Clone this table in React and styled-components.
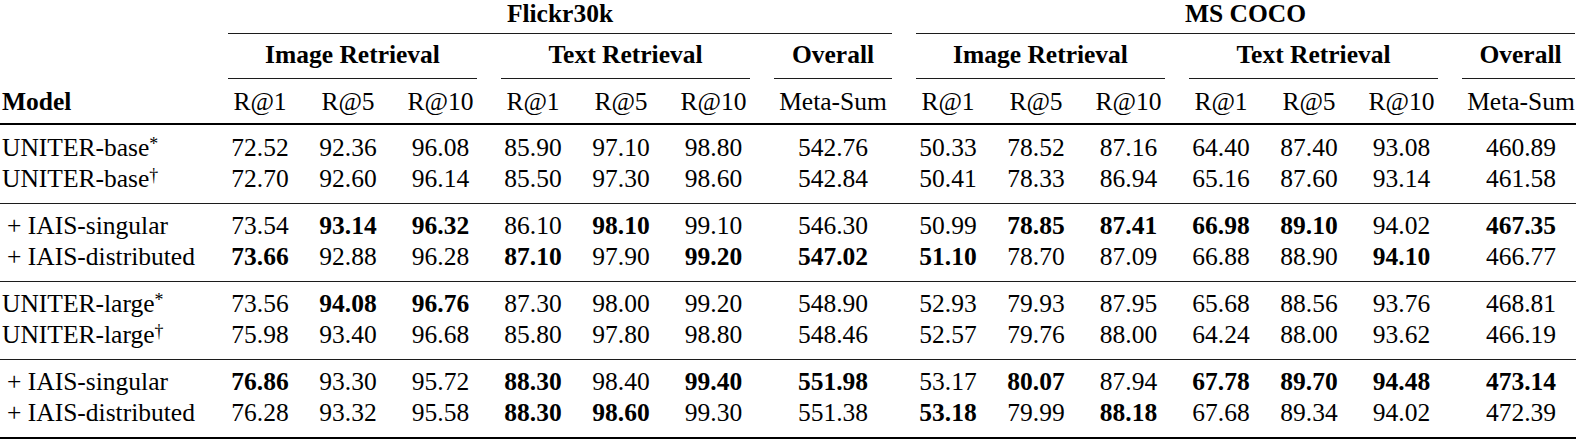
import React from "react";
import styled, { createGlobalStyle, css } from "styled-components";

const GlobalStyle = createGlobalStyle`
  html, body {
    margin: 0;
    padding: 0;
    background: #fff;
  }
  body {
    font-family: "Liberation Serif", "Times New Roman", serif;
    color: #000;
  }
`;

// model column, then (R@1 R@5 R@10) x2 + Meta-Sum for each dataset
const COLUMNS =
  "216px 88px 88px 97px 88px 88px 97px 142px 88px 88px 97px 88px 88px 97px 126px";

const Table = styled.div`
  width: 1576px;
  font-size: 25.5px;
  border-bottom: 2px solid #000;
`;

const Head = styled.div`
  border-bottom: 2px solid #000;
`;

const HeadRow = styled.div`
  display: grid;
  grid-template-columns: ${COLUMNS};
  & > * {
    padding-top: ${(p) => p.$top}px;
    padding-bottom: ${(p) => p.$bottom}px;
    line-height: ${(p) => p.$line}px;
  }
`;

const Group = styled.div`
  padding: 6px 0 9px;
  border-top: 1px solid transparent;
  & + & {
    border-top-color: #1c1c1c;
  }
`;

const Row = styled.div`
  display: grid;
  grid-template-columns: ${COLUMNS};
  line-height: 31px;
`;

const Cell = styled.div`
  grid-column: span ${(p) => p.$span || 1};
  text-align: ${(p) => (p.$left ? "left" : "center")};
  font-weight: ${(p) => (p.$bold ? 700 : 400)};
  padding-left: ${(p) => p.$indent || 0}px;
  white-space: nowrap;
  ${(p) =>
    p.$rule &&
    css`
      margin: 0 ${p.$trimRight ?? 12}px 0 12px;
      border-bottom: 1px solid #1c1c1c;
    `}
`;

const Mark = styled.sup`
  font-size: 0.7em;
  vertical-align: 0.32em;
  line-height: 0;
`;

const groups = [
  [
    {
      name: "UNITER-base",
      mark: "*",
      vals: ["72.52", "92.36", "96.08", "85.90", "97.10", "98.80", "542.76", "50.33", "78.52", "87.16", "64.40", "87.40", "93.08", "460.89"],
    },
    {
      name: "UNITER-base",
      mark: "†",
      vals: ["72.70", "92.60", "96.14", "85.50", "97.30", "98.60", "542.84", "50.41", "78.33", "86.94", "65.16", "87.60", "93.14", "461.58"],
    },
  ],
  [
    {
      name: "+ IAIS-singular",
      sub: true,
      vals: ["73.54", "*93.14", "*96.32", "86.10", "*98.10", "99.10", "546.30", "50.99", "*78.85", "*87.41", "*66.98", "*89.10", "94.02", "*467.35"],
    },
    {
      name: "+ IAIS-distributed",
      sub: true,
      vals: ["*73.66", "92.88", "96.28", "*87.10", "97.90", "*99.20", "*547.02", "*51.10", "78.70", "87.09", "66.88", "88.90", "*94.10", "466.77"],
    },
  ],
  [
    {
      name: "UNITER-large",
      mark: "*",
      vals: ["73.56", "*94.08", "*96.76", "87.30", "98.00", "99.20", "548.90", "52.93", "79.93", "87.95", "65.68", "88.56", "93.76", "468.81"],
    },
    {
      name: "UNITER-large",
      mark: "†",
      vals: ["75.98", "93.40", "96.68", "85.80", "97.80", "98.80", "548.46", "52.57", "79.76", "88.00", "64.24", "88.00", "93.62", "466.19"],
    },
  ],
  [
    {
      name: "+ IAIS-singular",
      sub: true,
      vals: ["*76.86", "93.30", "95.72", "*88.30", "98.40", "*99.40", "*551.98", "53.17", "*80.07", "87.94", "*67.78", "*89.70", "*94.48", "*473.14"],
    },
    {
      name: "+ IAIS-distributed",
      sub: true,
      vals: ["76.28", "93.32", "95.58", "*88.30", "*98.60", "99.30", "551.38", "*53.18", "79.99", "*88.18", "67.68", "89.34", "94.02", "472.39"],
    },
  ],
];

const metrics = ["R@1", "R@5", "R@10", "R@1", "R@5", "R@10", "Meta-Sum"];

const App = () => {
  return (
    <>
      <GlobalStyle />
      <Table>
        <Head>
          <HeadRow $top={4} $bottom={9} $line={20}>
            <Cell />
            <Cell $span={7} $bold $rule>
              Flickr30k
            </Cell>
            <Cell $span={7} $bold $rule $trimRight={1}>
              MS COCO
            </Cell>
          </HeadRow>
          <HeadRow $top={5} $bottom={8} $line={31}>
            <Cell />
            <Cell $span={3} $bold $rule>
              Image Retrieval
            </Cell>
            <Cell $span={3} $bold $rule>
              Text Retrieval
            </Cell>
            <Cell $bold $rule>
              Overall
            </Cell>
            <Cell $span={3} $bold $rule>
              Image Retrieval
            </Cell>
            <Cell $span={3} $bold $rule>
              Text Retrieval
            </Cell>
            <Cell $bold $rule $trimRight={1} $indent={4}>
              Overall
            </Cell>
          </HeadRow>
          <HeadRow $top={7} $bottom={6} $line={31}>
            <Cell $left $bold $indent={2}>
              Model
            </Cell>
            {[...metrics, ...metrics].map((m, i) => (
              <Cell key={i} $indent={i === 13 ? 16 : 0}>
                {m}
              </Cell>
            ))}
          </HeadRow>
        </Head>
        {groups.map((rows, g) => (
          <Group key={g}>
            {rows.map((r, i) => (
              <Row key={i}>
                <Cell $left $indent={r.sub ? 7 : 2}>
                  {r.name}
                  {r.mark && <Mark>{r.mark}</Mark>}
                </Cell>
                {r.vals.map((v, j) => (
                  <Cell key={j} $bold={v.startsWith("*")} $indent={j === 13 ? 16 : 0}>
                    {v.replace("*", "")}
                  </Cell>
                ))}
              </Row>
            ))}
          </Group>
        ))}
      </Table>
    </>
  );
};

export default App;
